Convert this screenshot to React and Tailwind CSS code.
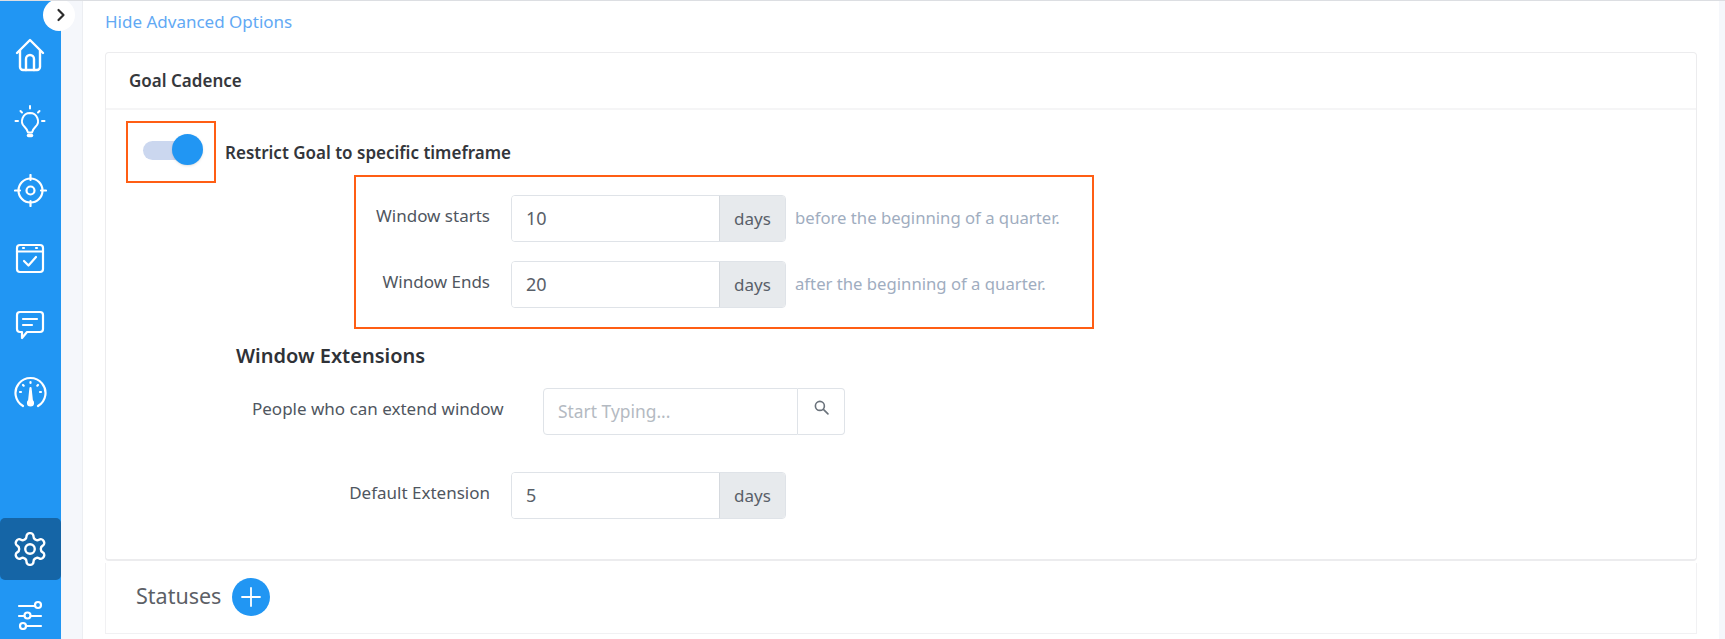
const HomeIcon = () => (
  <svg width="30" height="34" viewBox="0 0 30 34" fill="none" stroke="white" strokeWidth="2.400" strokeLinejoin="round" strokeLinecap="round">
    <path d="M2 15 15 2l13 13" />
    <path d="M5 12.500V29a3 3 0 0 0 3 3h14a3 3 0 0 0 3-3V12.500" />
    <path d="M11 32V21a4 4 0 0 1 8 0v11" />
  </svg>
);

const BulbIcon = () => (
  <svg width="32" height="34" viewBox="0 0 32 34" fill="none" stroke="white" strokeWidth="2" strokeLinecap="round" strokeLinejoin="round">
    <path d="M16 1v2.500M6.500 6 8 7.500M25.500 6 24 7.500M1.500 16H4M28 16h2.500" />
    <path d="M16 8a8 8 0 0 0-5.500 13.800c1.700 1.700 3 3.600 3.500 5.700h4c.5-2.100 1.800-4 3.500-5.700A8 8 0 0 0 16 8Z" />
    <path d="M14.500 30.500h3" strokeWidth="3.500" />
  </svg>
);

const TargetIcon = () => (
  <svg width="33" height="33" viewBox="0 0 33 33" fill="none" stroke="white" strokeWidth="2.200" strokeLinecap="round">
    <circle cx="16.500" cy="16.500" r="12" />
    <circle cx="16.500" cy="16.500" r="4" />
    <path d="M16.500 1v5M16.500 27v5M1 16.500h5M27 16.500h5" />
  </svg>
);

const CalendarIcon = () => (
  <svg width="30" height="31" viewBox="0 0 30 31" fill="none" stroke="white" strokeWidth="2.200" strokeLinecap="round" strokeLinejoin="round">
    <rect x="2" y="2" width="26" height="27" rx="3" />
    <path d="M2 8.500h26" />
    <path d="M8 5h1M21 5h1" />
    <path d="m9 18 4.500 4.500L21 14" />
  </svg>
);

const ChatIcon = () => (
  <svg width="30" height="30" viewBox="0 0 30 30" fill="none" stroke="white" strokeWidth="2.200" strokeLinecap="round" strokeLinejoin="round">
    <path d="M5 2h20a3 3 0 0 1 3 3v14a3 3 0 0 1-3 3H12l-5 6v-6H5a3 3 0 0 1-3-3V5a3 3 0 0 1 3-3Z" />
    <path d="M8 9h14M8 15h9" />
  </svg>
);

const GaugeIcon = () => (
  <svg width="33" height="32" viewBox="0 0 33 32" fill="none" stroke="white" strokeWidth="2.200" strokeLinecap="round" strokeLinejoin="round">
    <path d="M9 30A15 15 0 1 1 24 30" />
    <path d="M16.500 6v1M9 9l.7.7M24 9l-.7.7M6 16h1M26 16h1" />
    <path d="M16.500 12 15 26h3Z" fill="white" />
    <circle cx="16.500" cy="27" r="2.500" fill="white" />
  </svg>
);

const GearIcon = () => (
  <svg width="38" height="38" viewBox="0 0 24 24" fill="none" stroke="white" strokeWidth="1.500" strokeLinecap="round" strokeLinejoin="round">
    <path d="M12.220 2h-.44a2 2 0 0 0-2 2v.18a2 2 0 0 1-1 1.730l-.43.250a2 2 0 0 1-2 0l-.15-.080a2 2 0 0 0-2.730.730l-.220.380a2 2 0 0 0 .730 2.730l.150.100a2 2 0 0 1 1 1.720v.510a2 2 0 0 1-1 1.740l-.150.090a2 2 0 0 0-.730 2.730l.220.380a2 2 0 0 0 2.730.730l.150-.080a2 2 0 0 1 2 0l.430.250a2 2 0 0 1 1 1.730V20a2 2 0 0 0 2 2h.44a2 2 0 0 0 2-2v-.18a2 2 0 0 1 1-1.730l.430-.250a2 2 0 0 1 2 0l.150.080a2 2 0 0 0 2.730-.730l.220-.390a2 2 0 0 0-.730-2.730l-.150-.080a2 2 0 0 1-1-1.740v-.500a2 2 0 0 1 1-1.740l.150-.090a2 2 0 0 0 .730-2.730l-.220-.380a2 2 0 0 0-2.730-.730l-.150.080a2 2 0 0 1-2 0l-.430-.250a2 2 0 0 1-1-1.730V4a2 2 0 0 0-2-2z" />
    <circle cx="12" cy="12" r="3" />
  </svg>
);

const SlidersIcon = () => (
  <svg width="26" height="31" viewBox="0 0 26 31" fill="none" stroke="white" strokeWidth="2.200" strokeLinecap="round">
    <path d="M2 7h16M2 17h5M14 17h10M10 27h14" />
    <circle cx="21" cy="6" r="3" />
    <circle cx="10.500" cy="16.500" r="3" />
    <circle cx="6" cy="27" r="3" />
  </svg>
);

const SearchIcon = () => (
  <svg width="15" height="15" viewBox="0 0 14 14" fill="none" stroke="#6a727b" strokeWidth="1.500" strokeLinecap="round">
    <circle cx="5.500" cy="5.500" r="4.200" />
    <path d="m9 9 4 4" />
  </svg>
);

const NavItem = ({ children, active }) => (
  <div className={`h-[62px] w-full flex items-center justify-center pr-[1px] rounded-[5px] ${active ? 'bg-[#1565a6]' : ''}`}>
    {children}
  </div>
);

const DaysInput = ({ value }) => (
  <div className="w-[275px] h-[47px] flex rounded-[4px] border border-[#dfe3e8] overflow-hidden shrink-0">
    <div className="flex-1 pl-[14px] flex items-center text-[18px] text-[#596069] bg-white">{value}</div>
    <div className="w-[66px] bg-[#e7eaed] border-l border-[#d5d9de] flex items-center justify-center text-[17px] text-[#596069]">days</div>
  </div>
);

const WindowRow = ({ label, value, note }) => (
  <div className="flex items-center h-[47px]">
    <div className="w-[134px] text-right text-[17px] text-[#4f5660] whitespace-nowrap -mt-[6px]">{label}</div>
    <div className="ml-[21px]"><DaysInput value={value} /></div>
    {note && <div className="ml-[9px] text-[16.700px] text-[#9fadc0] whitespace-nowrap -mt-[2px]">{note}</div>}
  </div>
);

export default function App() {
  return (
    <div className="relative h-[639px] w-[1725px] overflow-hidden flex bg-[#f5f7fb] font-['Noto_Sans',sans-serif] border-t border-[#dcdee2]">
      <aside className="w-[61px] shrink-0 h-full bg-[#2196f3] flex flex-col">
        <div className="flex flex-col mt-[23px]">
          <NavItem><HomeIcon /></NavItem>
          <div className="mt-[5px]"><NavItem><BulbIcon /></NavItem></div>
          <div className="mt-[6px]"><NavItem><TargetIcon /></NavItem></div>
          <div className="mt-[6px]"><NavItem><CalendarIcon /></NavItem></div>
          <div className="mt-[5px]"><NavItem><ChatIcon /></NavItem></div>
          <div className="mt-[5px]"><NavItem><GaugeIcon /></NavItem></div>
        </div>
        <div className="mt-[95px]"><NavItem active><GearIcon /></NavItem></div>
        <div className="mt-[3px]"><NavItem><SlidersIcon /></NavItem></div>
      </aside>

      <div className="absolute left-[43px] top-[-2px] w-[32px] h-[32px] rounded-full bg-white flex items-center justify-center pl-[3px]">
        <svg width="10" height="14" viewBox="0 0 10 14" fill="none" stroke="#2c2c2c" strokeWidth="2.200" strokeLinecap="round" strokeLinejoin="round">
          <path d="m2.500 2 5 5-5 5" />
        </svg>
      </div>

      <main className="ml-[21px] w-[1637px] h-full bg-white border-l border-[#eceef2] pl-[22px] pr-[22px]">
        <div className="h-[51px] pt-[9px] text-[17px] leading-[24px] text-[#62a9f4]">Hide Advanced Options</div>

        <section className="h-[509px] rounded-[4px] border border-[#ececee] border-b-2">
          <div className="h-[57px] pl-[23px] flex items-center border-b-2 border-[#f5f5f6] text-[17px] font-semibold text-[#36383c]">Goal Cadence</div>

          <div className="pl-[20px] pt-[11px]">
            <div className="flex items-center">
              <div className="w-[90px] h-[62px] border-2 border-[#ff5e14] flex items-center pl-[15px] pb-[3px] relative">
                <div className="w-[46px] h-[19px] rounded-full bg-[#cbd7ef]" />
                <div className="absolute left-[44px] top-[11px] w-[31px] h-[31px] rounded-full bg-[#2196f3] shadow-sm" />
              </div>
              <div className="ml-[9px] text-[17px] font-semibold text-[#33363b] mt-[2px]">Restrict Goal to specific timeframe</div>
            </div>

            <div className="ml-[228px] -mt-[8px] w-[740px] h-[154px] border-[2.500px] border-[#ff5e14] pt-[18px] flex flex-col gap-[19px]">
              <WindowRow label="Window starts" value="10" note="before the beginning of a quarter." />
              <WindowRow label="Window Ends" value="20" note="after the beginning of a quarter." />
            </div>

            <div className="ml-[110px] mt-[14px] text-[20px] leading-[26px] font-semibold text-[#2f3237]">Window Extensions</div>

            <div className="ml-[126px] mt-[19px] flex items-center h-[47px]">
              <div className="w-[291px] text-[17px] text-[#4f5660] whitespace-nowrap -mt-[6px]">People who can extend window</div>
              <div className="w-[255px] h-[47px] rounded-l-[4px] border border-[#dfe3e8] pl-[14px] flex items-center text-[17.400px] text-[#b4bac2]">Start Typing...</div>
              <div className="w-[47px] h-[47px] rounded-r-[4px] border border-l-0 border-[#dfe3e8] flex items-center justify-center pb-[8px]"><SearchIcon /></div>
            </div>

            <div className="ml-[222px] mt-[37px] flex items-center h-[47px]">
              <div className="w-[142px] text-right text-[17px] text-[#4f5660] whitespace-nowrap -mt-[6px]">Default Extension</div>
              <div className="ml-[21px]"><DaysInput value="5" /></div>
            </div>
          </div>
        </section>

        <section className="mt-[2px] h-[71px] pl-[30px] flex items-center border-b border-x border-[#f1f1f3]">
          <span className="text-[21.500px] text-[#5c6066] -mt-[4px]">Statuses</span>
          <div className="ml-[11px] w-[38px] h-[38px] rounded-full bg-[#2196f3] flex items-center justify-center -mt-[2px]">
            <svg width="20" height="20" viewBox="0 0 20 20" stroke="white" strokeWidth="1.800" strokeLinecap="round">
              <path d="M10 1v18M1 10h18" />
            </svg>
          </div>
        </section>
      </main>
    </div>
  );
}
